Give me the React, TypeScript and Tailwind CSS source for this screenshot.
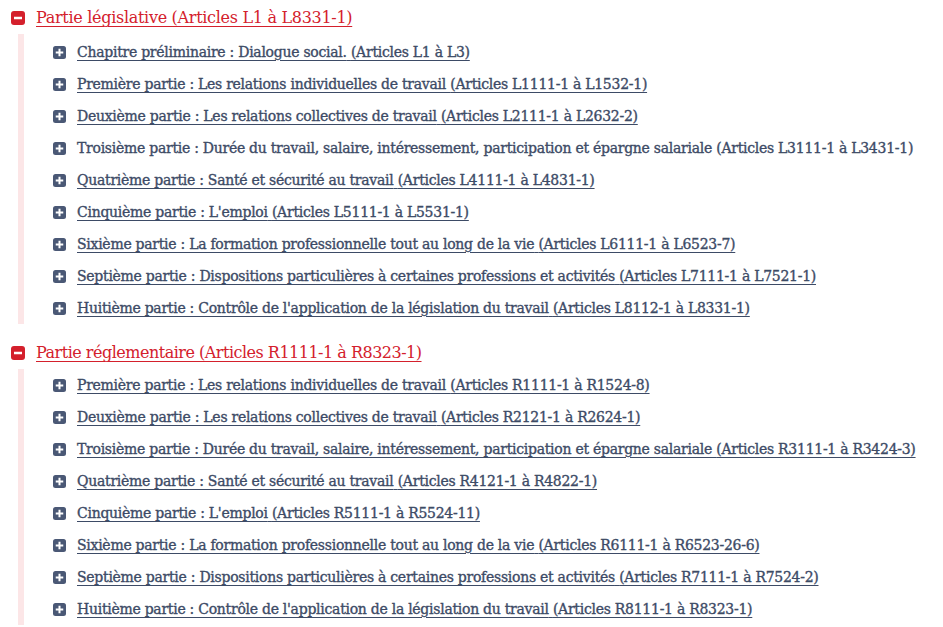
import React from "react";

const sections = [
  {
    title: "Partie législative (Articles L1 à L8331-1)",
    items: [
      ["Chapitre préliminaire : Dialogue social.", "(Articles L1 à L3)"],
      ["Première partie : Les relations individuelles de travail", "(Articles L1111-1 à L1532-1)"],
      ["Deuxième partie : Les relations collectives de travail", "(Articles L2111-1 à L2632-2)"],
      ["Troisième partie : Durée du travail, salaire, intéressement, participation et épargne salariale", "(Articles L3111-1 à L3431-1)", "nounderline"],
      ["Quatrième partie : Santé et sécurité au travail", "(Articles L4111-1 à L4831-1)"],
      ["Cinquième partie : L'emploi", "(Articles L5111-1 à L5531-1)"],
      ["Sixième partie : La formation professionnelle tout au long de la vie", "(Articles L6111-1 à L6523-7)"],
      ["Septième partie : Dispositions particulières à certaines professions et activités", "(Articles L7111-1 à L7521-1)"],
      ["Huitième partie : Contrôle de l'application de la législation du travail", "(Articles L8112-1 à L8331-1)"],
    ],
  },
  {
    title: "Partie réglementaire (Articles R1111-1 à R8323-1)",
    items: [
      ["Première partie : Les relations individuelles de travail", "(Articles R1111-1 à R1524-8)"],
      ["Deuxième partie : Les relations collectives de travail", "(Articles R2121-1 à R2624-1)"],
      ["Troisième partie : Durée du travail, salaire, intéressement, participation et épargne salariale", "(Articles R3111-1 à R3424-3)"],
      ["Quatrième partie : Santé et sécurité au travail", "(Articles R4121-1 à R4822-1)"],
      ["Cinquième partie : L'emploi", "(Articles R5111-1 à R5524-11)"],
      ["Sixième partie : La formation professionnelle tout au long de la vie", "(Articles R6111-1 à R6523-26-6)"],
      ["Septième partie : Dispositions particulières à certaines professions et activités", "(Articles R7111-1 à R7524-2)"],
      ["Huitième partie : Contrôle de l'application de la législation du travail", "(Articles R8111-1 à R8323-1)"],
    ],
  },
];

function Minus() {
  return (
    <svg width="14" height="14" viewBox="0 0 14 14" className="shrink-0">
      <rect x="0" y="0" width="14" height="14" rx="3" fill="#d4202c" />
      <rect x="3" y="5.75" width="8" height="2.5" fill="#fff" />
    </svg>
  );
}

function Plus() {
  return (
    <svg width="13" height="13" viewBox="0 0 13 13" className="shrink-0">
      <rect x="0" y="0" width="13" height="13" rx="2.5" fill="#4a5875" />
      <rect x="2.75" y="5.5" width="7.5" height="2" fill="#fff" />
      <rect x="5.5" y="2.75" width="2" height="7.5" fill="#fff" />
    </svg>
  );
}

export default function App() {
  return (
    <div
      className="w-[943px] h-[627px] overflow-hidden bg-white pt-[2px]"
      style={{ fontFamily: '"Roboto Slab", "DejaVu Serif", serif' }}
    >
      {sections.map((s, si) => (
        <div key={si} className={si === 0 ? "mb-[13px]" : ""}>
          <div className="flex items-center h-[32px] pl-[11px] gap-[11px]">
            <Minus />
            <span
              className={
                "text-[16px] text-[#d4202c] underline underline-offset-[3px] decoration-1 " +
                (si === 0 ? "tracking-[-0.3px]" : "tracking-[-0.5px]")
              }
            >
              {s.title}
            </span>
          </div>
          <ul
            className={
              "ml-[18px] border-l-[6px] border-[#fce6e7] pl-[29px] " +
              (si === 0 ? "pt-[2px]" : "pt-0")
            }
          >
            {s.items.map((it, i) => (
              <li key={i} className="flex items-center h-[32px] gap-[11px]">
                <Plus />
                <span className="text-[14px] text-[#3d4b66] tracking-[-0.27px] whitespace-nowrap [-webkit-text-stroke:0.35px_#3d4b66]">
                  {it[2] ? (
                    <span>{it[0]} {it[1]}</span>
                  ) : (
                    <>
                      <span className="underline underline-offset-[3px] decoration-1">{it[0]} </span>
                      <span className="underline underline-offset-[3px] decoration-1">{it[1]}</span>
                    </>
                  )}
                </span>
              </li>
            ))}
          </ul>
        </div>
      ))}
    </div>
  );
}
